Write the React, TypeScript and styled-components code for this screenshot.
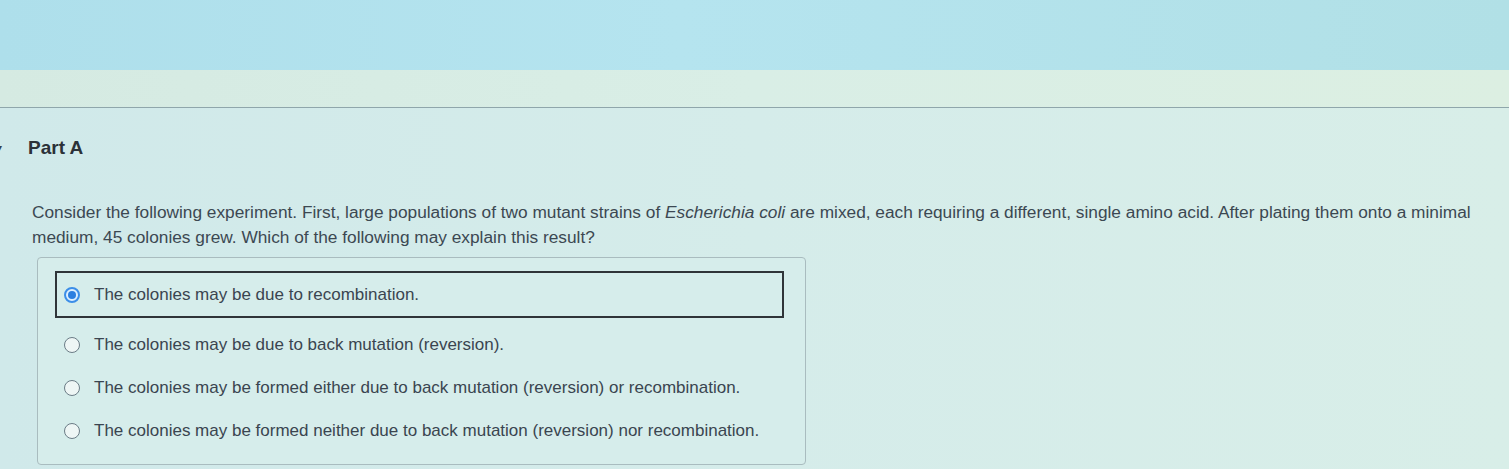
import React from "react";
import styled, { createGlobalStyle } from "styled-components";

const Global = createGlobalStyle`
  html, body {
    margin: 0;
    padding: 0;
    background: #d3ebea;
    overflow: hidden;
  }
  body {
    font-family: "Liberation Sans", Arial, sans-serif;
  }
`;

const Page = styled.div`
  width: 1509px;
  height: 469px;
  display: flex;
  flex-direction: column;
  background: linear-gradient(90deg, #d0e9ea 0%, #d5ecea 50%, #d8eee8 100%);
`;

const TopBand = styled.div`
  height: 70px;
  background: linear-gradient(90deg, #aedfeb 0%, #b5e4ef 45%, #b1e0e6 100%);
`;

const SubBand = styled.div`
  height: 37px;
  background: linear-gradient(90deg, #d5eae2 0%, #d9eee6 50%, #dcefe2 100%);
  border-bottom: 1px solid #8fa6ab;
`;

const Content = styled.div`
  position: relative;
  padding: 29px 28px 0 28px;
`;

const Caret = styled.span`
  position: absolute;
  left: -3px;
  top: 34px;
  color: #3a4149;
  font-size: 10px;
`;

const PartTitle = styled.h2`
  margin: 0;
  font-size: 19px;
  line-height: 22px;
  font-weight: 700;
  color: #2b3138;
`;

const Question = styled.p`
  margin: 41px 0 0 4px;
  font-size: 17.3px;
  line-height: 25px;
  color: #3c4852;
  width: 1460px;
`;

const AnswerBox = styled.div`
  margin: 7px 0 0 9px;
  width: 769px;
  padding: 13px 21px 12px 17px;
  box-sizing: border-box;
  border: 1px solid #a9bcbf;
  border-radius: 4px;
  background: #d6edeb;
`;

const Option = styled.label<{ $selected?: boolean }>`
  display: flex;
  align-items: center;
  gap: 14px;
  height: ${(p) => (p.$selected ? "47px" : "43px")};
  margin-bottom: ${(p) => (p.$selected ? "5px" : "0")};
  padding-left: 7px;
  box-sizing: border-box;
  border: ${(p) => (p.$selected ? "2px solid #2f3539" : "2px solid transparent")};
  font-size: 17px;
  color: #3a4550;
  cursor: pointer;
`;

const Radio = styled.span<{ $checked?: boolean }>`
  width: 16px;
  height: 16px;
  border-radius: 50%;
  box-sizing: border-box;
  flex: none;
  border: ${(p) => (p.$checked ? "2px solid #3c8ee8" : "1.5px solid #6b7c86")};
  background: ${(p) => (p.$checked ? "#dcefff" : "#eef6f5")};
  display: flex;
  align-items: center;
  justify-content: center;
  &::after {
    content: "";
    display: ${(p) => (p.$checked ? "block" : "none")};
    width: 8px;
    height: 8px;
    border-radius: 50%;
    background: #2c7fe0;
  }
`;

const options = [
  "The colonies may be due to recombination.",
  "The colonies may be due to back mutation (reversion).",
  "The colonies may be formed either due to back mutation (reversion) or recombination.",
  "The colonies may be formed neither due to back mutation (reversion) nor recombination.",
];

export default function App() {
  const selected = 0;
  return (
    <Page>
      <Global />
      <TopBand />
      <SubBand />
      <Content>
        <Caret>▾</Caret>
        <PartTitle>Part A</PartTitle>
        <Question>
          Consider the following experiment. First, large populations of two mutant strains of{" "}
          <i>Escherichia coli</i> are mixed, each requiring a different, single amino acid. After
          plating them onto a minimal medium, 45 colonies grew. Which of the following may explain
          this result?
        </Question>
        <AnswerBox>
          {options.map((o, i) => (
            <Option key={o} $selected={i === selected}>
              <Radio $checked={i === selected} />
              {o}
            </Option>
          ))}
        </AnswerBox>
      </Content>
    </Page>
  );
}
